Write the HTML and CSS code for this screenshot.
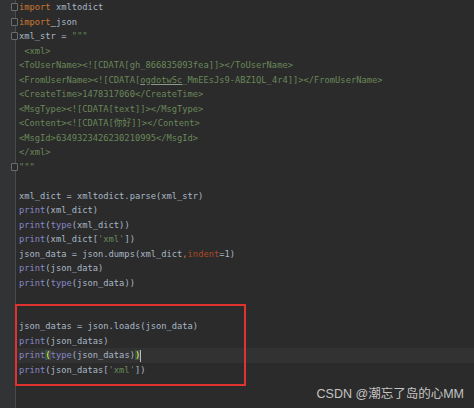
FILE: index.html
```html
<!DOCTYPE html>
<html lang="en">
<head>
    <meta charset="UTF-8">
    <title>xmltodict</title>
    <link rel="stylesheet" href="styles.css">
</head>
<body>
<div class="editor">
    <div class="row"><span class="gut"><i class="fold"></i></span><span class="code"><b class="kw">import</b> xmltodict</span></div>
    <div class="row"><span class="gut"><i class="fold"></i></span><span class="code"><b class="kw">import</b><u class="unused"> </u>json</span></div>
    <div class="row"><span class="gut"><i class="fold"></i></span><span class="code">xml_str = <span class="str">"""</span></span></div>
    <div class="row"><span class="gut"></span><span class="code str"> &lt;xml&gt;</span></div>
    <div class="row"><span class="gut"></span><span class="code str">&lt;ToUserName&gt;&lt;![CDATA[gh_866835093fea]]&gt;&lt;/ToUserName&gt;</span></div>
    <div class="row"><span class="gut"></span><span class="code str">&lt;FromUserName&gt;&lt;![CDATA[<u class="typo">ogdotwSc</u>_MmEEsJs9-ABZ1QL_4r4]]&gt;&lt;/FromUserName&gt;</span></div>
    <div class="row"><span class="gut"></span><span class="code str">&lt;CreateTime&gt;1478317060&lt;/CreateTime&gt;</span></div>
    <div class="row"><span class="gut"></span><span class="code str">&lt;MsgType&gt;&lt;![CDATA[text]]&gt;&lt;/MsgType&gt;</span></div>
    <div class="row"><span class="gut"></span><span class="code str">&lt;Content&gt;&lt;![CDATA[你好]]&gt;&lt;/Content&gt;</span></div>
    <div class="row"><span class="gut"></span><span class="code str">&lt;MsgId&gt;6349323426230210995&lt;/MsgId&gt;</span></div>
    <div class="row"><span class="gut"></span><span class="code str">&lt;/xml&gt;</span></div>
    <div class="row"><span class="gut"><i class="fold"></i></span><span class="code str">"""</span></div>
    <div class="row"><span class="gut"></span><span class="code"></span></div>
    <div class="row"><span class="gut"></span><span class="code">xml_dict = xmltodict.parse(xml_str)</span></div>
    <div class="row"><span class="gut"></span><span class="code"><span class="bi">print</span>(xml_dict)</span></div>
    <div class="row"><span class="gut"></span><span class="code"><span class="bi">print</span>(<span class="bi">type</span>(xml_dict))</span></div>
    <div class="row"><span class="gut"></span><span class="code"><span class="bi">print</span>(xml_dict[<span class="str">'xml'</span>])</span></div>
    <div class="row"><span class="gut"></span><span class="code">json_data = json.dumps(xml_dict<span class="comma">,</span><span class="kwarg">indent</span><span class="eq">=</span>1)</span></div>
    <div class="row"><span class="gut"></span><span class="code"><span class="bi">print</span>(json_data)</span></div>
    <div class="row"><span class="gut"></span><span class="code"><span class="bi">print</span>(<span class="bi">type</span>(json_data))</span></div>
    <div class="row"><span class="gut"></span><span class="code"></span></div>
    <div class="row"><span class="gut"></span><span class="code"></span></div>
    <div class="row"><span class="gut"></span><span class="code">json_datas = json.loads(json_data)</span></div>
    <div class="row"><span class="gut"></span><span class="code"><span class="bi">print</span>(json_datas)</span></div>
    <div class="row"><span class="gut"></span><span class="code current"><span class="bi">print</span><span class="brace">(</span><span class="bi">type</span>(json_datas)<span class="brace">)</span><span class="caret"></span></span></div>
    <div class="row"><span class="gut"></span><span class="code"><span class="bi">print</span>(json_datas[<span class="str">'xml'</span>])</span></div>

    <div class="mark"></div>
    <div class="watermark">CSDN @潮忘了岛的心MM</div>
</div>
</body>
</html>
```
FILE: styles.css
```css
*{
    margin:0;
    padding:0;
}
html,body{
    height:100%;
}
body{
    background:linear-gradient(to right,#313335 0,#313335 15px,#4a4a4a 15px,#4a4a4a 16px,#2b2b2b 16px);
    overflow:hidden;
}
.editor{
    position:relative;
    height:100%;
    font-family:"DejaVu Sans Mono","Liberation Mono","Noto Sans CJK SC",monospace;
    font-size:8.75px;
    color:#a9b7c6;
}
.row{
    display:flex;
    height:14.5px;
    line-height:14.5px;
    white-space:pre;
}
.gut{
    width:16px;
    flex:none;
    display:flex;
    align-items:center;
    justify-content:flex-end;
}
.fold{
    display:block;
    width:5px;
    height:6px;
    margin-right:-2px;
    border:1px solid #6b6e70;
    border-radius:1px;
    background:#2b2b2b;
}
.code{
    flex:1;
    padding-left:3px;
}
.code b{
    font-weight:normal;
}
.kw{
    color:#cc7832;
}
.str{
    color:#6a8759;
}
.bi{
    color:#8888c6;
}
.kwarg{
    color:#aa4926;
}
.comma{
    color:#cc7832;
}
.eq{
    color:#a9b7c6;
}
.unused{
    text-decoration:underline;
    text-decoration-color:#8a8a8a;
}
.typo{
    text-decoration:underline;
    text-decoration-color:#8a9a8a;
}
.current{
    background:#323232;
}
.brace{
    color:#ffef28;
    background:#3b514d;
}
.caret{
    display:inline-block;
    width:1px;
    height:12px;
    vertical-align:middle;
    background:#bbbbbb;
}
.mark{
    position:absolute;
    left:15px;
    top:304px;
    width:227px;
    height:78px;
    border:2px solid #e0322e;
}
.watermark{
    position:absolute;
    right:10px;
    top:386px;
    font-family:"Liberation Sans","Noto Sans CJK SC",sans-serif;
    font-size:12.5px;
    line-height:16px;
    color:#c4c4c4;
}
```
